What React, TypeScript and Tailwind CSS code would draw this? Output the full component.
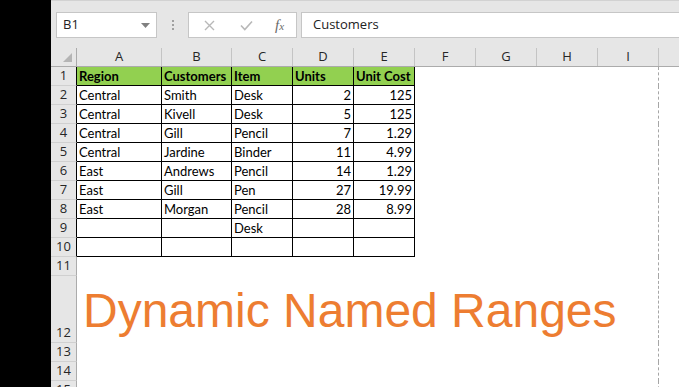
// Excel-Ansicht: Tabelle mit dynamischen benannten Bereichen
import React from 'react';

const COLS = ['A', 'B', 'C', 'D', 'E', 'F', 'G', 'H', 'I'];
const WIDTHS = ['w-[85px]', 'w-[70px]', 'w-[61px]', 'w-[61px]', 'w-[61px]', 'w-[61px]', 'w-[61px]', 'w-[61px]', 'w-[61px]'];

type Cell = { v: string; num?: boolean; bold?: boolean };

const DATA: Cell[][] = [
  [{ v: 'Region', bold: true }, { v: 'Customers', bold: true }, { v: 'Item', bold: true }, { v: 'Units', bold: true }, { v: 'Unit Cost', bold: true }],
  [{ v: 'Central' }, { v: 'Smith' }, { v: 'Desk' }, { v: '2', num: true }, { v: '125', num: true }],
  [{ v: 'Central' }, { v: 'Kivell' }, { v: 'Desk' }, { v: '5', num: true }, { v: '125', num: true }],
  [{ v: 'Central' }, { v: 'Gill' }, { v: 'Pencil' }, { v: '7', num: true }, { v: '1.29', num: true }],
  [{ v: 'Central' }, { v: 'Jardine' }, { v: 'Binder' }, { v: '11', num: true }, { v: '4.99', num: true }],
  [{ v: 'East' }, { v: 'Andrews' }, { v: 'Pencil' }, { v: '14', num: true }, { v: '1.29', num: true }],
  [{ v: 'East' }, { v: 'Gill' }, { v: 'Pen' }, { v: '27', num: true }, { v: '19.99', num: true }],
  [{ v: 'East' }, { v: 'Morgan' }, { v: 'Pencil' }, { v: '28', num: true }, { v: '8.99', num: true }],
  [{ v: '' }, { v: '' }, { v: 'Desk' }, { v: '' }, { v: '' }],
  [{ v: '' }, { v: '' }, { v: '' }, { v: '' }, { v: '' }],
];

const uiFont = "font-['Open_Sans',sans-serif]";
const cellFont = "font-['Lato',sans-serif]";

function TopBar() {
  return (
    <div className="h-[48px] shrink-0 bg-[#e6e6e6] border-t border-[#d2d2d2] flex items-start pt-[11px] pl-[5px]">
      {/* Namenfeld */}
      <div className={`w-[101px] h-[26px] bg-white border border-[#c6c6c6] flex items-center pl-[6px] pr-[6px] text-[13px] text-[#222] ${uiFont}`}>
        <span className="flex-1">B1</span>
        <svg width="9" height="5" viewBox="0 0 9 5">
          <path d="M0 0 H9 L4.5 5 Z" fill="#808080" />
        </svg>
      </div>
      <div className="w-[31px] h-[26px] flex flex-col items-center justify-center gap-[2px]">
        <div className="w-[2px] h-[2px] bg-[#a0a0a0]" />
        <div className="w-[2px] h-[2px] bg-[#a0a0a0]" />
        <div className="w-[2px] h-[2px] bg-[#a0a0a0]" />
      </div>
      {/* Funktionsknöpfe */}
      <div className="w-[109px] h-[26px] bg-white border border-[#c6c6c6] flex items-center">
        <div className="w-[36px] flex justify-center ml-[2px]">
          <svg width="11" height="11" viewBox="0 0 11 11">
            <path d="M1 1 L10 10 M10 1 L1 10" stroke="#b8b8b8" strokeWidth="1.4" />
          </svg>
        </div>
        <div className="w-[38px] flex justify-center">
          <svg width="13" height="11" viewBox="0 0 13 11">
            <path d="M1 5.5 L4.8 9.5 L12 1.5" stroke="#b8b8b8" strokeWidth="1.6" fill="none" />
          </svg>
        </div>
        <div className="flex-1 flex justify-center pr-[2px]">
          <span className="font-['Liberation_Serif',serif] italic text-[15px] leading-none text-[#6a6a6a]">
            f<span className="text-[11px]">x</span>
          </span>
        </div>
      </div>
      {/* Bearbeitungsleiste */}
      <div className={`ml-[4px] flex-1 h-[26px] bg-white border border-[#c6c6c6] border-r-0 flex items-center pl-[11px] text-[13px] text-[#222] ${uiFont}`}>
        Customers
      </div>
    </div>
  );
}

function HeaderRow() {
  return (
    <div className="h-[19px] shrink-0 flex bg-[#e6e6e6] border-b border-[#ababab]">
      <div className="w-[26px] relative border-r border-[#ababab]">
        <svg className="absolute left-[12px] top-[5px]" width="9" height="9" viewBox="0 0 9 9">
          <path d="M9 0 V9 H0 Z" fill="#b4b4b4" />
        </svg>
      </div>
      {COLS.map((c, i) => (
        <div
          key={c}
          className={`${WIDTHS[i]} border-r border-[#c4c4c4] flex items-center justify-center text-[13px] text-[#262626] ${uiFont}`}
        >
          {c}
        </div>
      ))}
      <div className="flex-1" />
    </div>
  );
}

function RowHead({ n, table, h }: { n: number; table: boolean; h: string }) {
  return (
    <div
      className={`w-[26px] ${h} shrink-0 bg-[#e6e6e6] border-b border-[#d0d0d0] border-r ${table ? 'border-r-black' : 'border-r-[#ababab]'} flex items-end justify-center pb-[1px] text-[13px] leading-[17px] text-[#262626] ${uiFont}`}
    >
      {n}
    </div>
  );
}

function DataRow({ n, cells }: { n: number; cells?: Cell[] }) {
  return (
    <div className="flex h-[19px] shrink-0">
      <RowHead n={n} table={!!cells} h="h-[19px]" />
      {COLS.map((c, i) => {
        const cell = cells && i < 5 ? cells[i] : undefined;
        const inTable = !!cells && i < 5;
        const green = n === 1 && inTable;
        return (
          <div
            key={c}
            className={`${WIDTHS[i]} h-[19px] shrink-0 px-[2px] text-[13px] leading-[18px] text-black whitespace-nowrap overflow-hidden ${cellFont}
              ${inTable ? 'border-r border-b border-black' : i === 8 ? 'border-r border-dashed border-[#a6a6a6]' : ''}
              ${green ? 'bg-[#92d050]' : 'bg-white'}
              ${cell?.num ? 'text-right' : 'text-left'}
              ${cell?.bold ? 'font-bold' : ''}`}
          >
            {cell?.v}
          </div>
        );
      })}
      <div className="flex-1 bg-white" />
    </div>
  );
}

function TitleRow() {
  return (
    <div className="flex h-[67px] shrink-0">
      <RowHead n={12} table={false} h="h-[67px]" />
      <div className="w-[85px] shrink-0 relative bg-white">
        <div className="absolute left-[6px] bottom-[8px] whitespace-nowrap font-['Liberation_Sans',Arial,sans-serif] text-[48px] leading-none text-[#ed7d31]">
          Dynamic Named Ranges
        </div>
      </div>
      <div className="w-[436px] shrink-0 bg-white" />
      <div className="w-[61px] shrink-0 bg-white border-r border-dashed border-[#a6a6a6]" />
      <div className="flex-1 bg-white" />
    </div>
  );
}

export default function App() {
  return (
    <div className="w-[679px] h-[387px] overflow-hidden flex bg-white">
      <div className="w-[51px] shrink-0 bg-black" />
      <div className="flex-1 flex flex-col min-w-0">
        <TopBar />
        <HeaderRow />
        {DATA.map((row, i) => (
          <DataRow key={i} n={i + 1} cells={row} />
        ))}
        <DataRow n={11} />
        <TitleRow />
        <DataRow n={13} />
        <DataRow n={14} />
        <DataRow n={15} />
      </div>
    </div>
  );
}
